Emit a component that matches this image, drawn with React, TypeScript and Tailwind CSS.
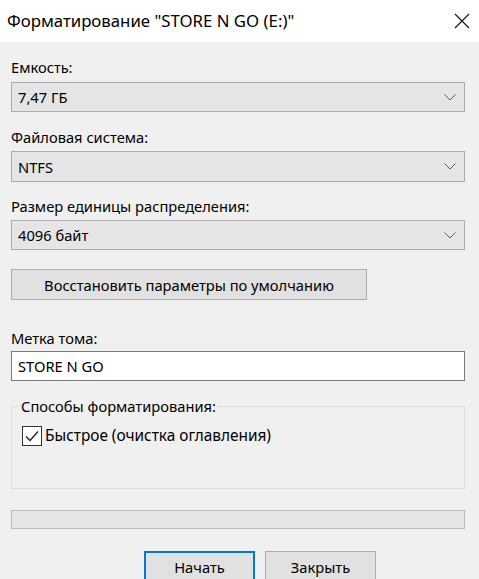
import React from "react";

function Chevron() {
  return (
    <svg width="12" height="7" viewBox="0 0 12 7" className="shrink-0">
      <path d="M0.5 0.5 L6 6 L11.5 0.5" fill="none" stroke="#5a5a5a" strokeWidth="1" />
    </svg>
  );
}

function Combo({ value, className = "" }: { value: string; className?: string }) {
  return (
    <div
      className={`flex h-[30px] items-center justify-between border border-[#adadad] bg-[#e5e5e5] pl-[6px] pr-[8px] ${className}`}
    >
      <span>{value}</span>
      <Chevron />
    </div>
  );
}

export default function App() {
  return (
    <div
      className="h-[579px] w-[479px] overflow-hidden bg-[#f0f0f0] text-[14.7px] leading-[20px] text-black"
      style={{ fontFamily: '"Noto Sans", "Open Sans", sans-serif' }}
    >
      {/* title bar */}
      <div className="flex h-[42px] items-center justify-between bg-white pl-[7px] pr-[9px]">
        <span className="text-[16.8px]">Форматирование "STORE N GO (E:)"</span>
        <svg width="16" height="16" viewBox="0 0 16 16">
          <path d="M1 1 L15 15 M15 1 L1 15" stroke="#111" strokeWidth="1.1" />
        </svg>
      </div>

      <div className="px-[11px] pr-[14px]">
        <div className="mt-[15px]">Емкость:</div>
        <Combo value="7,47 ГБ" className="mt-[5px]" />

        <div className="mt-[15px]">Файловая система:</div>
        <Combo value="NTFS" className="mt-[4px] h-[31px]" />

        <div className="mt-[14px]">Размер единицы распределения:</div>
        <Combo value="4096 байт" className="mt-[4px]" />

        <button className="mt-[19px] flex h-[31px] w-[356px] items-center justify-center border border-[#adadad] bg-[#e1e1e1]">
          Восстановить параметры по умолчанию
        </button>

        <div className="mt-[28px]">Метка тома:</div>
        <div className="mt-[3px] flex h-[30px] items-center border border-[#7a7a7a] bg-white pl-[6px]">
          STORE N GO
        </div>

        <fieldset className="mt-[15px] h-[93px] border border-[#dcdcdc] px-[10px] pt-[10px]">
          <legend className="ml-[-2px] px-[1px] leading-[20px]">Способы форматирования:</legend>
          <label className="flex items-center gap-[3px]">
            <span className="flex h-[20px] w-[20px] items-center justify-center border border-[#333] bg-white">
              <svg width="14" height="12" viewBox="0 0 14 12">
                <path d="M1 6.5 L5 10.5 L13 1.5" fill="none" stroke="#222" strokeWidth="1.4" />
              </svg>
            </span>
            <span className="text-[15.4px]">Быстрое (очистка оглавления)</span>
          </label>
        </fieldset>

        <div className="mt-[21px] h-[19px] border border-[#bcbcbc] bg-[#e6e6e6]" />

        <div className="ml-[133px] mt-[22px] flex gap-[10px]">
          <button className="flex h-[32px] w-[111px] items-center justify-center border-2 border-[#0078d7] bg-[#e1e1e1]">
            Начать
          </button>
          <button className="flex h-[32px] w-[111px] items-center justify-center border border-[#adadad] bg-[#e1e1e1]">
            Закрыть
          </button>
        </div>
      </div>
    </div>
  );
}
